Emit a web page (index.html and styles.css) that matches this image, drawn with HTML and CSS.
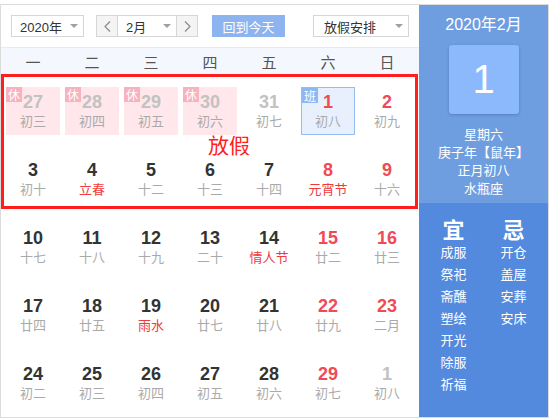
FILE: index.html
```html
<!DOCTYPE html>
<html lang="zh-CN">
<head>
    <meta charset="UTF-8">
    <meta name="viewport" content="width=device-width, initial-scale=1.0">
    <title>万年历</title>
    <link rel="stylesheet" href="styles.css">
</head>
<body>
    <div class="calendar">
        <div class="main">
            <div class="toolbar">
                <div class="select year-select"><span>2020年</span><i class="caret"></i></div>
                <div class="month-group">
                    <div class="nav-btn">
                        <svg width="7" height="11" viewBox="0 0 7 11"><polyline points="6,0.5 1,5.5 6,10.5" fill="none" stroke="#8a8a8a" stroke-width="1.2"/></svg>
                    </div>
                    <div class="select month-select"><span>2月</span><i class="caret"></i></div>
                    <div class="nav-btn">
                        <svg width="7" height="11" viewBox="0 0 7 11"><polyline points="1,0.5 6,5.5 1,10.5" fill="none" stroke="#8a8a8a" stroke-width="1.2"/></svg>
                    </div>
                </div>
                <button class="today-btn" type="button">回到今天</button>
                <div class="select holiday-select"><span>放假安排</span><i class="caret"></i></div>
            </div>

            <div class="weekdays">
                <span>一</span><span>二</span><span>三</span><span>四</span><span>五</span><span>六</span><span>日</span>
            </div>

            <div class="days">
                <!-- week 1 -->
                <div class="day rest other"><em class="tag">休</em><b>27</b><small>初三</small></div>
                <div class="day rest other"><em class="tag">休</em><b>28</b><small>初四</small></div>
                <div class="day rest other"><em class="tag">休</em><b>29</b><small>初五</small></div>
                <div class="day rest other"><em class="tag">休</em><b>30</b><small>初六</small></div>
                <div class="day other"><b>31</b><small>初七</small></div>
                <div class="day work weekend"><em class="tag">班</em><b>1</b><small>初八</small></div>
                <div class="day weekend"><b>2</b><small>初九</small></div>
                <!-- week 2 -->
                <div class="day"><b>3</b><small>初十</small></div>
                <div class="day"><b>4</b><small class="fest">立春</small></div>
                <div class="day"><b>5</b><small>十二</small></div>
                <div class="day"><b>6</b><small>十三</small></div>
                <div class="day"><b>7</b><small>十四</small></div>
                <div class="day weekend"><b>8</b><small class="fest">元宵节</small></div>
                <div class="day weekend"><b>9</b><small>十六</small></div>
                <!-- week 3 -->
                <div class="day"><b>10</b><small>十七</small></div>
                <div class="day"><b>11</b><small>十八</small></div>
                <div class="day"><b>12</b><small>十九</small></div>
                <div class="day"><b>13</b><small>二十</small></div>
                <div class="day"><b>14</b><small class="fest">情人节</small></div>
                <div class="day weekend"><b>15</b><small>廿二</small></div>
                <div class="day weekend"><b>16</b><small>廿三</small></div>
                <!-- week 4 -->
                <div class="day"><b>17</b><small>廿四</small></div>
                <div class="day"><b>18</b><small>廿五</small></div>
                <div class="day"><b>19</b><small class="fest">雨水</small></div>
                <div class="day"><b>20</b><small>廿七</small></div>
                <div class="day"><b>21</b><small>廿八</small></div>
                <div class="day weekend"><b>22</b><small>廿九</small></div>
                <div class="day weekend"><b>23</b><small>二月</small></div>
                <!-- week 5 -->
                <div class="day"><b>24</b><small>初二</small></div>
                <div class="day"><b>25</b><small>初三</small></div>
                <div class="day"><b>26</b><small>初四</small></div>
                <div class="day"><b>27</b><small>初五</small></div>
                <div class="day"><b>28</b><small>初六</small></div>
                <div class="day weekend"><b>29</b><small>初七</small></div>
                <div class="day other"><b>1</b><small>初八</small></div>
            </div>

            <!-- marker around the holiday weeks -->
            <div class="holiday-mark">
                <span class="holiday-label">放假</span>
            </div>
        </div>

        <div class="side">
            <div class="side-top">
                <div class="side-month">2020年2月</div>
                <div class="big-day">1</div>
                <div class="side-info">
                    <p>星期六</p>
                    <p>庚子年【鼠年】</p>
                    <p>正月初八</p>
                    <p>水瓶座</p>
                </div>
            </div>
            <div class="side-bottom">
                <div class="almanac">
                    <h3>宜</h3>
                    <span>成服</span>
                    <span>祭祀</span>
                    <span>斋醮</span>
                    <span>塑绘</span>
                    <span>开光</span>
                    <span>除服</span>
                    <span>祈福</span>
                </div>
                <div class="almanac">
                    <h3>忌</h3>
                    <span>开仓</span>
                    <span>盖屋</span>
                    <span>安葬</span>
                    <span>安床</span>
                </div>
            </div>
        </div>
    </div>
</body>
</html>
```

FILE: styles.css
```css
body {
    margin: 0;
    padding-top: 4px;
    font-family: "Liberation Sans", "Noto Sans CJK SC", sans-serif;
    background: #fff;
}

.calendar {
    display: flex;
    width: 547px;
    height: 412px;
    border: 1px solid #dcdcdc;
}

.main {
    position: relative;
    width: 418px;
}

/* toolbar */

.toolbar {
    display: flex;
    align-items: flex-start;
    height: 42px;
    padding: 10px 10px 0;
    box-sizing: border-box;
}

.select {
    display: flex;
    align-items: center;
    justify-content: space-between;
    height: 22px;
    box-sizing: border-box;
    border: 1px solid #d6d6d6;
    background: #fff;
    font-size: 13px;
    color: #333;
    padding: 0 5px 0 8px;
}

.caret {
    width: 0;
    height: 0;
    border-left: 4px solid transparent;
    border-right: 4px solid transparent;
    border-top: 4px solid #a0a0a0;
}

.year-select {
    width: 73px;
}

.month-group {
    display: flex;
    margin-left: 12px;
}

.nav-btn {
    display: flex;
    align-items: center;
    justify-content: center;
    width: 22px;
    height: 22px;
    box-sizing: border-box;
    border: 1px solid #d6d6d6;
    background: #f4f4f4;
}

.month-select {
    width: 58px;
    border-left: none;
    border-right: none;
}

.today-btn {
    margin-left: 14px;
    width: 73px;
    height: 22px;
    border: none;
    padding: 0;
    background: #8eb4ef;
    color: #fff;
    font-family: "Noto Sans CJK SC", sans-serif;
    font-size: 13px;
}

.holiday-select {
    margin-left: auto;
    width: 96px;
    padding-left: 10px;
}

/* weekday header */

.weekdays {
    display: grid;
    grid-template-columns: repeat(7, 54px);
    column-gap: 5px;
    padding: 0 3px 0 5px;
    height: 26px;
    align-items: center;
    background: #f4f7fe;
    border-top: 1px solid #e6ebf3;
    font-family: "Noto Sans CJK SC", sans-serif;
    font-size: 15px;
    color: #555;
    text-align: center;
}

/* day grid */

.days {
    display: grid;
    grid-template-columns: repeat(7, 54px);
    grid-auto-rows: 48px;
    gap: 20px 5px;
    padding: 13px 3px 0 5px;
}

.day {
    position: relative;
    display: flex;
    flex-direction: column;
    align-items: center;
    padding-top: 5px;
    box-sizing: border-box;
}

.day b {
    font-size: 18px;
    line-height: 20px;
    font-weight: bold;
    color: #333;
}

.day small {
    font-family: "Noto Sans CJK SC", sans-serif;
    font-size: 13px;
    line-height: 18px;
    color: #aaa;
}

.day.weekend b {
    color: #f04a55;
}

.day.other b {
    color: #c2c2c2;
}

.day small.fest {
    color: #ee3b3b;
}

.day.rest {
    background: #ffe7eb;
}

.day.work {
    background: #e8f0fd;
    border: 1px solid #95bdf4;
    padding-top: 4px;
}

.tag {
    position: absolute;
    left: 0;
    top: 0;
    width: 16px;
    height: 15px;
    font-style: normal;
    font-family: "Noto Sans CJK SC", sans-serif;
    font-size: 12px;
    line-height: 15px;
    text-align: center;
    color: #fff;
    background: #f7b2bd;
}

.day.work .tag {
    background: #8fb8f3;
}

.holiday-mark {
    position: absolute;
    left: 0;
    top: 69px;
    width: 417px;
    height: 135px;
    box-sizing: border-box;
    border: 3px solid #ff1d1d;
    pointer-events: none;
}

.holiday-label {
    position: absolute;
    left: 204px;
    top: 56px;
    font-family: "Noto Sans CJK SC", sans-serif;
    font-size: 21px;
    line-height: 22px;
    color: #ff1d1d;
}

/* right panel */

.side {
    width: 129px;
    display: flex;
    flex-direction: column;
    color: #fff;
    font-family: "Noto Sans CJK SC", sans-serif;
}

.side-top {
    background: #6f9ee0;
    height: 198px;
    display: flex;
    flex-direction: column;
    align-items: center;
    padding-top: 10px;
    box-sizing: border-box;
}

.side-month {
    font-family: "Liberation Sans", "Noto Sans CJK SC", sans-serif;
    font-size: 16px;
    line-height: 20px;
}

.big-day {
    margin-top: 10px;
    width: 70px;
    height: 69px;
    border-radius: 3px;
    background: #8bb9fb;
    box-shadow: 0 1px 3px rgba(40, 70, 130, 0.35);
    font-family: "Liberation Sans", sans-serif;
    font-size: 40px;
    line-height: 69px;
    text-align: center;
}

.side-info {
    margin-top: 11px;
    text-align: center;
}

.side-info p {
    margin: 0;
    font-size: 13px;
    line-height: 18px;
}

.side-bottom {
    flex: 1;
    background: #548ade;
    display: grid;
    grid-template-columns: 60px 60px;
    justify-content: center;
    align-content: start;
    padding-top: 12px;
}

.almanac {
    display: flex;
    flex-direction: column;
    align-items: center;
}

.almanac h3 {
    margin: 0;
    font-size: 22px;
    line-height: 26px;
    font-weight: bold;
}

.almanac span {
    font-size: 13px;
    line-height: 22px;
}
```
